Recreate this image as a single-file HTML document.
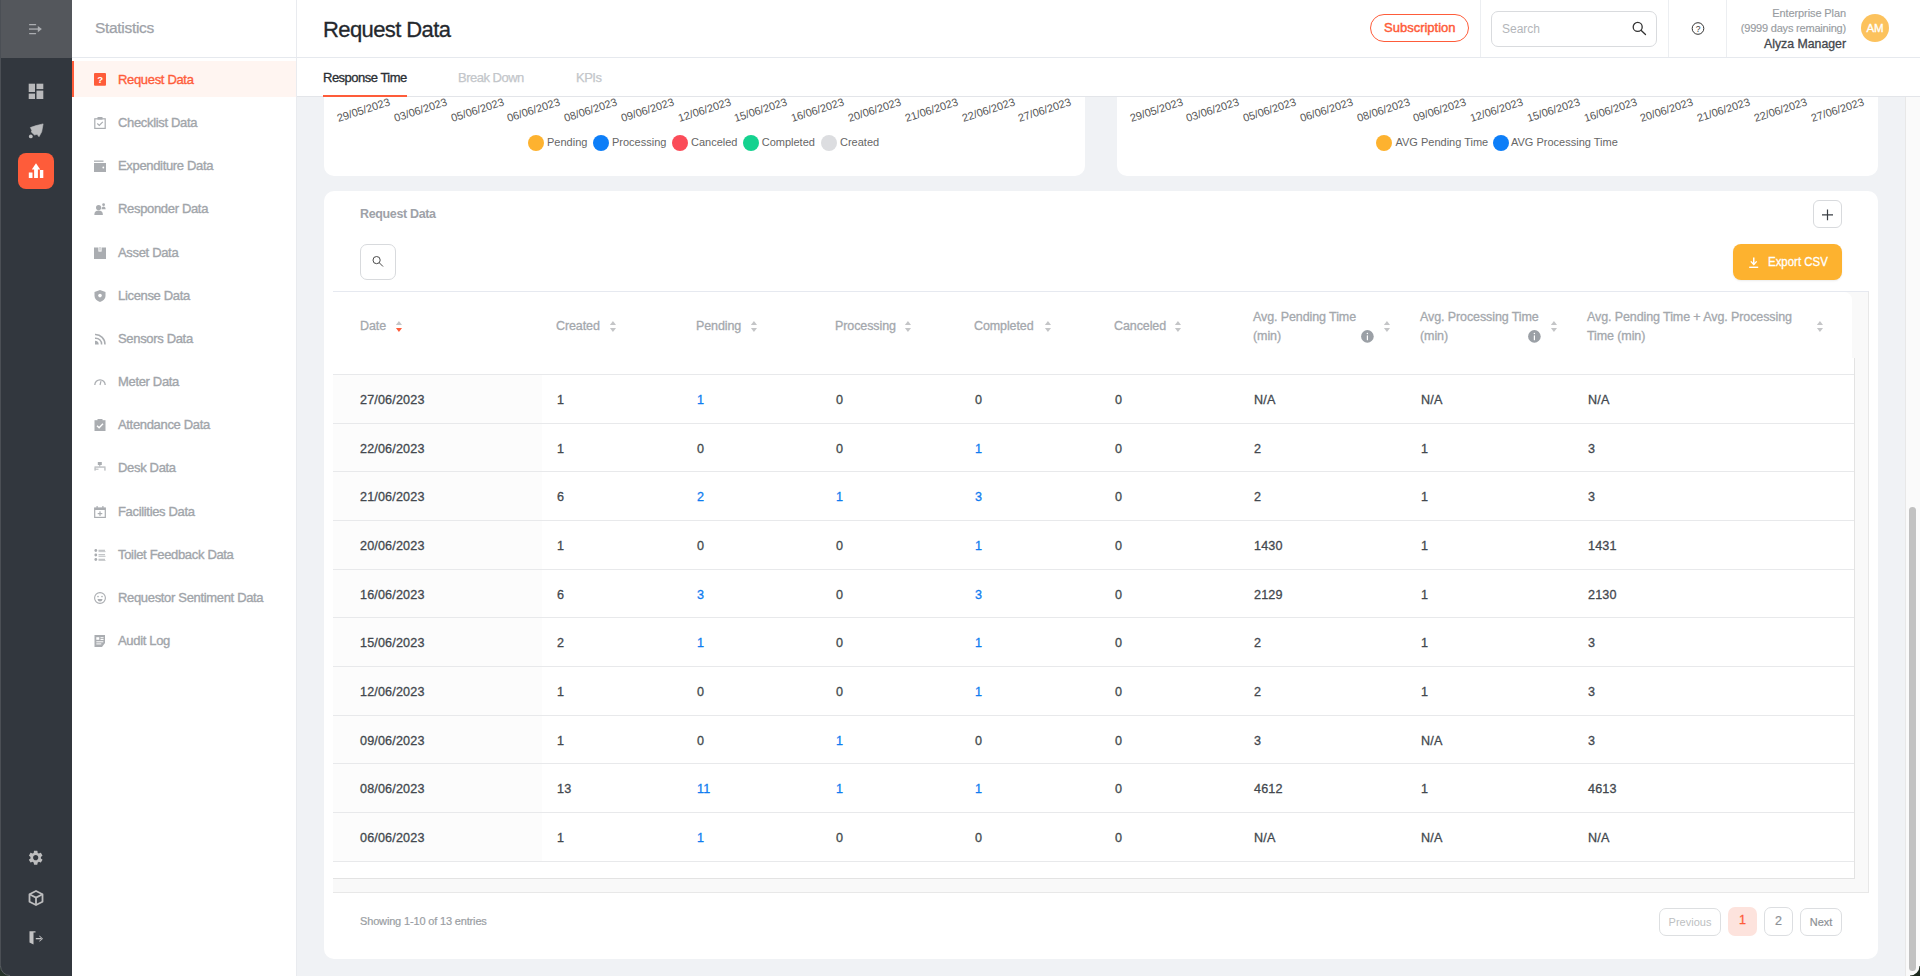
<!DOCTYPE html><html><head><meta charset="utf-8"><style>
*{box-sizing:border-box;margin:0;padding:0}
html,body{width:1920px;height:976px;overflow:hidden;background:#f0f2f5;font-family:"Liberation Sans",sans-serif;position:relative}
.t{position:absolute;white-space:nowrap;line-height:1}
.b{position:absolute}
.menu{position:absolute;left:72px;width:224px;height:36px}
.menu .lbl{position:absolute;left:46px;top:12px;font-size:13px;color:#a1a5aa;white-space:nowrap;line-height:14px;letter-spacing:-0.33px;-webkit-text-stroke:0.35px}
.menu svg{position:absolute;left:22px;top:13px}
.axis{position:absolute;font-size:11px;color:#555;white-space:nowrap;line-height:11px;transform:rotate(-18deg);transform-origin:0 100%}
.leg{position:absolute;font-size:11px;color:#666;white-space:nowrap;line-height:11px}
.dot{position:absolute;width:16px;height:16px;border-radius:50%}
.th{position:absolute;font-size:12.5px;color:#a4a8ad;white-space:nowrap;line-height:19px;letter-spacing:-0.1px;-webkit-text-stroke:0.3px}
.td{position:absolute;font-size:12.6px;color:#43484e;white-space:nowrap;line-height:13px;-webkit-text-stroke:0.3px;letter-spacing:0.15px}
.bl{color:#0f7cf0}
.hl{position:absolute;height:1px;background:#e8e9eb}
</style></head><body>
<div class="b" style="left:0;top:0;width:72px;height:976px;background:#32373e"></div>
<div class="b" style="left:0;top:0;width:72px;height:58px;background:#54575c"></div>
<svg class="b" style="left:0;top:0" width="72" height="58"><g fill="#abadb1"><rect x="29" y="24" width="7.2" height="1.3" rx=".6"/><rect x="29" y="28.4" width="9.5" height="1.3"/><rect x="29" y="32.9" width="7.2" height="1.3" rx=".6"/><path d="M37.8 25.9 L41.9 29.05 L37.8 32.2Z"/></g></svg>
<svg class="b" style="left:28px;top:83px" width="16" height="17"><g fill="#b9b9bb"><rect x="0.7" y="0.7" width="6.3" height="8.3"/><rect x="0.7" y="10.6" width="6.3" height="5.4"/><rect x="8.5" y="0.7" width="6.8" height="5.4"/><rect x="8.5" y="7.6" width="6.8" height="8.4"/></g></svg>
<svg class="b" style="left:28px;top:122px" width="17" height="17"><g fill="#bbbcbe" stroke="#bbbcbe" stroke-width="0.6" stroke-linejoin="round"><path d="M15.1 1.9 L8.1 3.6 L2.4 5.5 L3.8 8.4 L3.3 10.1 L6.5 13 L9 12.3 L11 14.7 L13.7 9.8Z"/></g><circle cx="2.8" cy="14.4" r="1.9" fill="#bbbcbe"/></svg>
<div class="b" style="left:18px;top:153px;width:36px;height:36px;border-radius:8px;background:#fe5c3a"></div>
<svg class="b" style="left:18px;top:153px" width="36" height="36"><g fill="#fff"><rect x="10.8" y="19.5" width="3.7" height="5.5"/><rect x="21.9" y="17" width="3.4" height="8"/><rect x="16.1" y="14.5" width="3.8" height="10.5"/><path d="M13.8 16.5 L18 10.3 L22.2 16.5Z"/></g></svg>
<svg class="b" style="left:27.3px;top:849.4px" width="17.4" height="17.4" viewBox="0 0 24 24"><path fill="#bdbdbe" d="M19.14 12.94c.04-.3.06-.61.06-.94 0-.32-.02-.64-.07-.94l2.03-1.58a.49.49 0 0 0 .12-.61l-1.92-3.32a.488.488 0 0 0-.59-.22l-2.39.96c-.5-.38-1.03-.7-1.62-.94l-.36-2.54a.484.484 0 0 0-.48-.41h-3.84c-.24 0-.43.17-.47.41l-.36 2.54c-.59.24-1.13.57-1.62.94l-2.39-.96c-.22-.08-.47 0-.59.22L2.74 8.87c-.12.21-.08.47.12.61l2.03 1.58c-.05.3-.09.63-.09.94s.02.64.07.94l-2.03 1.58a.49.49 0 0 0-.12.61l1.92 3.32c.12.22.37.29.59.22l2.39-.96c.5.38 1.03.7 1.62.94l.36 2.54c.05.24.24.41.48.41h3.84c.24 0 .44-.17.47-.41l.36-2.54c.59-.24 1.13-.56 1.62-.94l2.39.96c.22.08.47 0 .59-.22l1.92-3.32c.12-.22.07-.47-.12-.61l-2.01-1.58zM12 15.6c-1.98 0-3.6-1.62-3.6-3.6s1.62-3.6 3.6-3.6 3.6 1.62 3.6 3.6-1.62 3.6-3.6 3.6z"/></svg>
<svg class="b" style="left:28px;top:890px" width="16" height="16"><g fill="none" stroke="#bdbdbe" stroke-width="1.8" stroke-linejoin="round"><path d="M8 1 L14.5 4.3 L14.5 11.7 L8 15 L1.5 11.7 L1.5 4.3Z"/><path d="M1.5 4.3 L8 7.6 L14.5 4.3 M8 7.6 L8 15"/></g></svg>
<svg class="b" style="left:28px;top:930px" width="16" height="16"><g fill="#c3c3c4"><path d="M1.5 1.3 L7.5 1.3 L7.5 2.5 L5.5 2.5 L5.5 14.5 L1.5 12.5Z"/><rect x="7.8" y="8" width="5.5" height="1.3"/><path d="M11.5 5.6 L15 8.65 L11.5 11.7 L11.2 11.1 L13.8 8.65 L11.2 6.2Z"/></g></svg>
<div class="b" style="left:72px;top:0;width:225px;height:976px;background:#fff;border-right:1px solid #e9ebef"></div>
<div class="b" style="left:72px;top:57px;width:225px;height:1px;background:#e6e9ee"></div>
<div class="t" style="left:95px;top:20px;font-size:15.5px;color:#9ea2a8;letter-spacing:-0.3px;-webkit-text-stroke:0.25px">Statistics</div>
<div class="menu" style="top:61.0px;background:#fff5f1;border-left:2px solid #fe5c3a"></div>
<div class="menu" style="top:61.0px"><svg width="12" height="13" style="top:12px"><rect x="0" y="0" width="12" height="12.7" rx="1" fill="#fe5c3a"/><text x="6.1" y="10" font-size="9.5" font-weight="bold" fill="#fff" text-anchor="middle" font-family="Liberation Sans">?</text></svg><div class="lbl" style="color:#fe5c3a">Request Data</div></div>
<div class="menu" style="top:104.2px"><svg width="12" height="12"><g fill="none" stroke="#aaadb1" stroke-width="1.2"><rect x="0.8" y="1.8" width="10.4" height="9.6"/><path d="M3.3 6.5 L5.3 8.4 L8.8 4.8"/></g><rect x="3.5" y="0" width="5" height="2.6" fill="#aaadb1"/></svg><div class="lbl">Checklist Data</div></div>
<div class="menu" style="top:147.3px"><svg width="12" height="12"><g fill="#aaadb1"><rect x="0" y="0.5" width="9.5" height="1.3"/><rect x="0" y="3" width="12" height="9"/></g><circle cx="9.3" cy="7.5" r="0.9" fill="#fff"/></svg><div class="lbl">Expenditure Data</div></div>
<div class="menu" style="top:190.4px"><svg width="12" height="12"><g fill="#aaadb1"><circle cx="4.6" cy="4.6" r="2.6"/><path d="M0.3 12 C0.3 8.8 2 7.6 4.6 7.6 C7.2 7.6 8.9 8.8 8.9 12Z"/><circle cx="9.6" cy="1.7" r="1.4"/><path d="M7.6 6.3 C7.6 4.3 8.4 3.5 9.6 3.5 C10.8 3.5 11.6 4.3 11.6 6.3Z"/></g></svg><div class="lbl">Responder Data</div></div>
<div class="menu" style="top:233.6px"><svg width="12" height="12"><rect x="0" y="0.5" width="12" height="11.5" fill="#aaadb1"/><rect x="4.4" y="0" width="3.2" height="4.6" fill="#fff"/><rect x="5.2" y="0" width="1.6" height="3.6" fill="#cfd1d4"/></svg><div class="lbl">Asset Data</div></div>
<div class="menu" style="top:276.8px"><svg width="12" height="12"><path fill="#aaadb1" d="M6 0 L11.5 2 L11.5 6 C11.5 9 9 11 6 12 C3 11 0.5 9 0.5 6 L0.5 2Z"/><circle cx="6" cy="5.6" r="1.8" fill="#fff"/></svg><div class="lbl">License Data</div></div>
<div class="menu" style="top:319.9px"><svg width="12" height="12"><g fill="none" stroke="#aaadb1" stroke-width="1.5"><path d="M1 5.2 A6 6 0 0 1 7.6 11.5"/><path d="M1 1.6 A9.6 9.6 0 0 1 11 11.5"/></g><path d="M1 7.8 A3.7 3.7 0 0 1 4.7 11.5 L1 11.5Z" fill="#aaadb1"/></svg><div class="lbl">Sensors Data</div></div>
<div class="menu" style="top:363.1px"><svg width="12" height="12"><g fill="none" stroke="#aaadb1" stroke-width="1.3"><path d="M0.8 9 A5.2 5.2 0 0 1 11.2 9"/></g><path d="M6 9 L7 5.2" stroke="#aaadb1" stroke-width="1.2"/></svg><div class="lbl">Meter Data</div></div>
<div class="menu" style="top:406.2px"><svg width="12" height="12"><rect x="0.5" y="1.2" width="11" height="10.8" fill="#aaadb1"/><rect x="3.5" y="0" width="5" height="2.4" fill="#aaadb1"/><path d="M3 6.7 L5.1 8.7 L9 4.7" fill="none" stroke="#fff" stroke-width="1.4"/></svg><div class="lbl">Attendance Data</div></div>
<div class="menu" style="top:449.3px"><svg width="12" height="12"><g fill="#aaadb1"><rect x="3.8" y="0" width="4" height="3"/><rect x="5.3" y="3" width="1" height="1.5"/><rect x="0.5" y="4.5" width="11" height="1.1"/><rect x="0.5" y="5.6" width="1.1" height="3"/><rect x="10.4" y="5.6" width="1.1" height="3"/><rect x="1.5" y="6.5" width="3" height="1.5" opacity=".6"/></g></svg><div class="lbl">Desk Data</div></div>
<div class="menu" style="top:492.5px"><svg width="12" height="12"><g fill="none" stroke="#aaadb1" stroke-width="1.2"><rect x="0.7" y="2" width="10.6" height="9.4"/></g><g fill="#aaadb1"><rect x="0.7" y="2" width="10.6" height="2"/><rect x="2.5" y="0" width="1.2" height="2.5"/><rect x="8.3" y="0" width="1.2" height="2.5"/><rect x="5.4" y="5.3" width="1.2" height="4.6"/><rect x="3.7" y="7" width="4.6" height="1.2"/></g></svg><div class="lbl">Facilities Data</div></div>
<div class="menu" style="top:535.6px"><svg width="12" height="12"><g fill="#aaadb1"><circle cx="1.8" cy="1.5" r="1.4"/><circle cx="1.8" cy="6" r="1.4"/><circle cx="1.8" cy="10.5" r="1.4"/><rect x="4.5" y="0.8" width="6.5" height="0.9"/><rect x="4.5" y="2.4" width="7" height="0.7"/><rect x="4.5" y="5.3" width="6.5" height="0.9"/><rect x="4.5" y="6.9" width="7" height="0.7"/><rect x="4.5" y="9.8" width="6.5" height="0.9"/><rect x="4.5" y="11.4" width="7" height="0.7"/></g></svg><div class="lbl">Toilet Feedback Data</div></div>
<div class="menu" style="top:578.8px"><svg width="12" height="12"><g fill="none" stroke="#aaadb1" stroke-width="1.1"><circle cx="6" cy="6" r="5.4"/></g><g fill="#aaadb1"><circle cx="4" cy="4.6" r="0.8"/><circle cx="8" cy="4.6" r="0.8"/><path d="M3.5 7 L8.5 7 C8.3 8.7 7.3 9.5 6 9.5 C4.7 9.5 3.7 8.7 3.5 7Z"/></g></svg><div class="lbl">Requestor Sentiment Data</div></div>
<div class="menu" style="top:621.9px"><svg width="12" height="12"><g fill="#aaadb1"><path d="M0.5 0 L11 0 L11 8 L8 12 L0.5 12Z"/></g><g fill="#fff"><rect x="2.3" y="2.2" width="3" height="2.6"/><rect x="6.5" y="2.2" width="3" height="1"/><rect x="6.5" y="4" width="3" height="1"/><rect x="2.3" y="6.3" width="7" height="1"/><rect x="2.3" y="8.4" width="5" height="1"/></g></svg><div class="lbl">Audit Log</div></div>
<div class="b" style="left:297px;top:0;width:1623px;height:58px;background:#fff;border-bottom:1px solid #e6e9ee"></div>
<div class="t" style="left:323px;top:19px;font-size:22px;color:#24282d;letter-spacing:-0.6px;-webkit-text-stroke:0.3px">Request Data</div>
<div class="b" style="left:1370px;top:14px;width:99px;height:28px;border:1px solid #fe5c3a;border-radius:14px"></div>
<div class="t" style="left:1384px;top:21px;font-size:13px;color:#fe5c3a;-webkit-text-stroke:0.45px">Subscription</div>
<div class="b" style="left:1480px;top:0;width:1px;height:57px;background:#eceef1"></div>
<div class="b" style="left:1668px;top:0;width:1px;height:57px;background:#eceef1"></div>
<div class="b" style="left:1726px;top:0;width:1px;height:57px;background:#eceef1"></div>
<div class="b" style="left:1491px;top:11px;width:166px;height:36px;border:1px solid #d9dbde;border-radius:7px"></div>
<div class="t" style="left:1502px;top:23px;font-size:12px;color:#b3b6ba">Search</div>
<svg class="b" style="left:1631px;top:20px" width="16" height="16"><g fill="none" stroke="#333" stroke-width="1.3"><circle cx="6.7" cy="6.9" r="4.5"/><path d="M10 10.2 L14.5 14.5" stroke-linecap="round"/></g></svg>
<svg class="b" style="left:1690px;top:21px" width="16" height="16"><circle cx="8" cy="7.5" r="5.8" fill="none" stroke="#333" stroke-width="1"/><text x="8" y="10.6" font-size="8.5" text-anchor="middle" fill="#333" font-family="Liberation Sans">?</text></svg>
<div class="t" style="right:74px;top:8px;font-size:11px;color:#989ca1;text-align:right;-webkit-text-stroke:0.15px;letter-spacing:-0.1px">Enterprise Plan</div>
<div class="t" style="right:74px;top:23px;font-size:11px;color:#989ca1;text-align:right;-webkit-text-stroke:0.15px;letter-spacing:-0.2px">(9999 days remaining)</div>
<div class="t" style="right:74px;top:38px;font-size:12.3px;color:#43474d;text-align:right;-webkit-text-stroke:0.3px">Alyza Manager</div>
<div class="b" style="left:1861px;top:14px;width:28px;height:28px;border-radius:50%;background:#fcc25d"></div>
<div class="t" style="left:1861px;top:23px;width:28px;text-align:center;font-size:11.5px;color:#fff;-webkit-text-stroke:0.3px">AM</div>
<div class="b" style="left:324px;top:60px;width:761px;height:116px;background:#fff;border-radius:10px"></div>
<div class="b" style="left:1117px;top:60px;width:761px;height:116px;background:#fff;border-radius:10px"></div>
<div class="axis" style="left:339.0px;top:113px">29/05/2023</div>
<div class="axis" style="left:395.8px;top:113px">03/06/2023</div>
<div class="axis" style="left:452.5px;top:113px">05/06/2023</div>
<div class="axis" style="left:509.3px;top:113px">06/06/2023</div>
<div class="axis" style="left:566.1px;top:113px">08/06/2023</div>
<div class="axis" style="left:622.9px;top:113px">09/06/2023</div>
<div class="axis" style="left:679.6px;top:113px">12/06/2023</div>
<div class="axis" style="left:736.4px;top:113px">15/06/2023</div>
<div class="axis" style="left:793.2px;top:113px">16/06/2023</div>
<div class="axis" style="left:849.9px;top:113px">20/06/2023</div>
<div class="axis" style="left:906.7px;top:113px">21/06/2023</div>
<div class="axis" style="left:963.5px;top:113px">22/06/2023</div>
<div class="axis" style="left:1020.2px;top:113px">27/06/2023</div>
<div class="axis" style="left:1131.5px;top:113px">29/05/2023</div>
<div class="axis" style="left:1188.3px;top:113px">03/06/2023</div>
<div class="axis" style="left:1245.0px;top:113px">05/06/2023</div>
<div class="axis" style="left:1301.8px;top:113px">06/06/2023</div>
<div class="axis" style="left:1358.6px;top:113px">08/06/2023</div>
<div class="axis" style="left:1415.3px;top:113px">09/06/2023</div>
<div class="axis" style="left:1472.1px;top:113px">12/06/2023</div>
<div class="axis" style="left:1528.9px;top:113px">15/06/2023</div>
<div class="axis" style="left:1585.7px;top:113px">16/06/2023</div>
<div class="axis" style="left:1642.4px;top:113px">20/06/2023</div>
<div class="axis" style="left:1699.2px;top:113px">21/06/2023</div>
<div class="axis" style="left:1756.0px;top:113px">22/06/2023</div>
<div class="axis" style="left:1812.7px;top:113px">27/06/2023</div>
<div class="dot" style="left:528px;top:134.5px;background:#fdb22f"></div><div class="leg" style="left:547px;top:137px">Pending</div>
<div class="dot" style="left:593px;top:134.5px;background:#0d7ef8"></div><div class="leg" style="left:612px;top:137px">Processing</div>
<div class="dot" style="left:671.5px;top:134.5px;background:#fb4c59"></div><div class="leg" style="left:691px;top:137px">Canceled</div>
<div class="dot" style="left:742.7px;top:134.5px;background:#15d28f"></div><div class="leg" style="left:761.7px;top:137px">Completed</div>
<div class="dot" style="left:821px;top:134.5px;background:#dcdde0"></div><div class="leg" style="left:840px;top:137px">Created</div>
<div class="dot" style="left:1376.4px;top:134.5px;background:#fdb22f"></div><div class="leg" style="left:1395.5px;top:137px">AVG Pending Time</div>
<div class="dot" style="left:1492.6px;top:134.5px;background:#0d7ef8"></div><div class="leg" style="left:1511px;top:137px">AVG Processing Time</div>
<div class="b" style="left:297px;top:58px;width:1623px;height:39px;background:#fff;border-bottom:1px solid #e3e5e9"></div>
<div class="t" style="left:323px;top:71px;font-size:13px;color:#2a2e33;letter-spacing:-0.5px;-webkit-text-stroke:0.3px">Response Time</div>
<div class="t" style="left:458px;top:71px;font-size:13px;color:#c3c6ca;letter-spacing:-0.5px;-webkit-text-stroke:0.25px">Break Down</div>
<div class="t" style="left:576px;top:71px;font-size:13px;color:#c3c6ca;letter-spacing:-0.5px;-webkit-text-stroke:0.25px">KPIs</div>
<div class="b" style="left:323px;top:95px;width:84px;height:2px;background:#fe5c3a"></div>
<div class="b" style="left:324px;top:191px;width:1554px;height:768px;background:#fff;border-radius:10px"></div>
<div class="t" style="left:360px;top:208px;font-size:12.5px;color:#9ea2a8;font-weight:bold;letter-spacing:-0.35px">Request Data</div>
<div class="b" style="left:1813px;top:200px;width:29px;height:28px;border:1px solid #d8dadd;border-radius:6px"></div>
<svg class="b" style="left:1813px;top:200px" width="29" height="28"><path d="M14.5 9.5 V20.2 M9 14.8 H20" stroke="#3a3f44" stroke-width="1.2"/></svg>
<div class="b" style="left:360px;top:244px;width:36px;height:36px;border:1px solid #d8dadd;border-radius:7px"></div>
<svg class="b" style="left:360px;top:244px" width="36" height="36"><g fill="none" stroke="#4a4a4a" stroke-width="1"><circle cx="16.6" cy="16.1" r="3.6"/><path d="M19.2 18.7 L23 22.5"/></g></svg>
<div class="b" style="left:1733px;top:244px;width:109px;height:36px;background:#fdb22f;border-radius:8px;box-shadow:0 1px 2px rgba(0,0,0,.08)"></div>
<svg class="b" style="left:1747px;top:256px" width="14" height="14"><g fill="#fff"><rect x="6" y="1.5" width="1.5" height="7"/><path d="M3.3 5.8 L6.75 9.5 L10.2 5.8 L9.2 5 L6.75 7.5 L4.3 5Z"/><rect x="2.2" y="10.6" width="9" height="1.4"/></g></svg>
<div class="t" style="left:1767.5px;top:255px;font-size:13px;color:#fff;transform:scaleX(0.88);transform-origin:0 0;-webkit-text-stroke:0.3px">Export CSV</div>
<div class="b" style="left:333px;top:291px;width:1536px;height:602px;background:#f9f9f9;border:1px solid #e8e8e8;border-top-color:#e6e9f0;border-left:none"></div>
<div class="b" style="left:333px;top:358px;width:1522px;height:521px;background:#fff;border-right:1px solid #e3e3e3;border-bottom:1px solid #e3e3e3"></div>
<div class="b" style="left:333px;top:292px;width:1519px;height:82px;background:#fff;border-top-right-radius:8px"></div>
<div class="b" style="left:333px;top:375px;width:209px;height:486px;background:#fcfcfc"></div>
<div class="th" style="left:360px;top:317px">Date</div>
<svg class="b" style="left:394.5px;top:320px" width="8" height="14"><path d="M0.9 5.1 L3.95 1.1 L7 5.1Z" fill="#c4c5c7"/><path d="M0.9 8.1 L3.95 12.1 L7 8.1Z" fill="#fe5c3a"/></svg>
<div class="th" style="left:556px;top:317px">Created</div>
<svg class="b" style="left:608.5px;top:320px" width="8" height="14"><path d="M0.9 5.1 L3.95 1.1 L7 5.1Z" fill="#c4c5c7"/><path d="M0.9 8.1 L3.95 12.1 L7 8.1Z" fill="#c4c5c7"/></svg>
<div class="th" style="left:696px;top:317px">Pending</div>
<svg class="b" style="left:749.5px;top:320px" width="8" height="14"><path d="M0.9 5.1 L3.95 1.1 L7 5.1Z" fill="#c4c5c7"/><path d="M0.9 8.1 L3.95 12.1 L7 8.1Z" fill="#c4c5c7"/></svg>
<div class="th" style="left:835px;top:317px">Processing</div>
<svg class="b" style="left:903.5px;top:320px" width="8" height="14"><path d="M0.9 5.1 L3.95 1.1 L7 5.1Z" fill="#c4c5c7"/><path d="M0.9 8.1 L3.95 12.1 L7 8.1Z" fill="#c4c5c7"/></svg>
<div class="th" style="left:974px;top:317px">Completed</div>
<svg class="b" style="left:1043.5px;top:320px" width="8" height="14"><path d="M0.9 5.1 L3.95 1.1 L7 5.1Z" fill="#c4c5c7"/><path d="M0.9 8.1 L3.95 12.1 L7 8.1Z" fill="#c4c5c7"/></svg>
<div class="th" style="left:1114px;top:317px">Canceled</div>
<svg class="b" style="left:1173.5px;top:320px" width="8" height="14"><path d="M0.9 5.1 L3.95 1.1 L7 5.1Z" fill="#c4c5c7"/><path d="M0.9 8.1 L3.95 12.1 L7 8.1Z" fill="#c4c5c7"/></svg>
<div class="th" style="left:1253px;top:308px">Avg. Pending Time<br>(min)</div>
<div class="th" style="left:1420px;top:308px">Avg. Processing Time<br>(min)</div>
<div class="th" style="left:1587px;top:308px">Avg. Pending Time + Avg. Processing<br>Time (min)</div>
<svg class="b" style="left:1382.5px;top:320px" width="8" height="14"><path d="M0.9 5.1 L3.95 1.1 L7 5.1Z" fill="#c4c5c7"/><path d="M0.9 8.1 L3.95 12.1 L7 8.1Z" fill="#c4c5c7"/></svg>
<svg class="b" style="left:1549.5px;top:320px" width="8" height="14"><path d="M0.9 5.1 L3.95 1.1 L7 5.1Z" fill="#c4c5c7"/><path d="M0.9 8.1 L3.95 12.1 L7 8.1Z" fill="#c4c5c7"/></svg>
<svg class="b" style="left:1815.5px;top:320px" width="8" height="14"><path d="M0.9 5.1 L3.95 1.1 L7 5.1Z" fill="#c4c5c7"/><path d="M0.9 8.1 L3.95 12.1 L7 8.1Z" fill="#c4c5c7"/></svg>
<svg class="b" style="left:1361px;top:330px" width="14" height="14"><circle cx="6.4" cy="6.4" r="6.3" fill="#9ba0a6"/><rect x="5.8" y="5.2" width="1.2" height="5" rx=".5" fill="#fff"/><circle cx="6.4" cy="3.6" r=".75" fill="#fff"/></svg>
<svg class="b" style="left:1528px;top:330px" width="14" height="14"><circle cx="6.4" cy="6.4" r="6.3" fill="#9ba0a6"/><rect x="5.8" y="5.2" width="1.2" height="5" rx=".5" fill="#fff"/><circle cx="6.4" cy="3.6" r=".75" fill="#fff"/></svg>
<div class="hl" style="left:333px;top:374px;width:1521px"></div>
<div class="td" style="left:360px;top:393.60px">27/06/2023</div>
<div class="td" style="left:557px;top:393.60px">1</div>
<div class="td bl" style="left:697px;top:393.60px">1</div>
<div class="td" style="left:836px;top:393.60px">0</div>
<div class="td" style="left:975px;top:393.60px">0</div>
<div class="td" style="left:1115px;top:393.60px">0</div>
<div class="td" style="left:1254px;top:393.60px">N/A</div>
<div class="td" style="left:1421px;top:393.60px">N/A</div>
<div class="td" style="left:1588px;top:393.60px">N/A</div>
<div class="hl" style="left:333px;top:423px;width:1521px"></div>
<div class="td" style="left:360px;top:442.60px">22/06/2023</div>
<div class="td" style="left:557px;top:442.60px">1</div>
<div class="td" style="left:697px;top:442.60px">0</div>
<div class="td" style="left:836px;top:442.60px">0</div>
<div class="td bl" style="left:975px;top:442.60px">1</div>
<div class="td" style="left:1115px;top:442.60px">0</div>
<div class="td" style="left:1254px;top:442.60px">2</div>
<div class="td" style="left:1421px;top:442.60px">1</div>
<div class="td" style="left:1588px;top:442.60px">3</div>
<div class="hl" style="left:333px;top:471px;width:1521px"></div>
<div class="td" style="left:360px;top:490.60px">21/06/2023</div>
<div class="td" style="left:557px;top:490.60px">6</div>
<div class="td bl" style="left:697px;top:490.60px">2</div>
<div class="td bl" style="left:836px;top:490.60px">1</div>
<div class="td bl" style="left:975px;top:490.60px">3</div>
<div class="td" style="left:1115px;top:490.60px">0</div>
<div class="td" style="left:1254px;top:490.60px">2</div>
<div class="td" style="left:1421px;top:490.60px">1</div>
<div class="td" style="left:1588px;top:490.60px">3</div>
<div class="hl" style="left:333px;top:520px;width:1521px"></div>
<div class="td" style="left:360px;top:539.60px">20/06/2023</div>
<div class="td" style="left:557px;top:539.60px">1</div>
<div class="td" style="left:697px;top:539.60px">0</div>
<div class="td" style="left:836px;top:539.60px">0</div>
<div class="td bl" style="left:975px;top:539.60px">1</div>
<div class="td" style="left:1115px;top:539.60px">0</div>
<div class="td" style="left:1254px;top:539.60px">1430</div>
<div class="td" style="left:1421px;top:539.60px">1</div>
<div class="td" style="left:1588px;top:539.60px">1431</div>
<div class="hl" style="left:333px;top:569px;width:1521px"></div>
<div class="td" style="left:360px;top:588.60px">16/06/2023</div>
<div class="td" style="left:557px;top:588.60px">6</div>
<div class="td bl" style="left:697px;top:588.60px">3</div>
<div class="td" style="left:836px;top:588.60px">0</div>
<div class="td bl" style="left:975px;top:588.60px">3</div>
<div class="td" style="left:1115px;top:588.60px">0</div>
<div class="td" style="left:1254px;top:588.60px">2129</div>
<div class="td" style="left:1421px;top:588.60px">1</div>
<div class="td" style="left:1588px;top:588.60px">2130</div>
<div class="hl" style="left:333px;top:617px;width:1521px"></div>
<div class="td" style="left:360px;top:636.60px">15/06/2023</div>
<div class="td" style="left:557px;top:636.60px">2</div>
<div class="td bl" style="left:697px;top:636.60px">1</div>
<div class="td" style="left:836px;top:636.60px">0</div>
<div class="td bl" style="left:975px;top:636.60px">1</div>
<div class="td" style="left:1115px;top:636.60px">0</div>
<div class="td" style="left:1254px;top:636.60px">2</div>
<div class="td" style="left:1421px;top:636.60px">1</div>
<div class="td" style="left:1588px;top:636.60px">3</div>
<div class="hl" style="left:333px;top:666px;width:1521px"></div>
<div class="td" style="left:360px;top:685.60px">12/06/2023</div>
<div class="td" style="left:557px;top:685.60px">1</div>
<div class="td" style="left:697px;top:685.60px">0</div>
<div class="td" style="left:836px;top:685.60px">0</div>
<div class="td bl" style="left:975px;top:685.60px">1</div>
<div class="td" style="left:1115px;top:685.60px">0</div>
<div class="td" style="left:1254px;top:685.60px">2</div>
<div class="td" style="left:1421px;top:685.60px">1</div>
<div class="td" style="left:1588px;top:685.60px">3</div>
<div class="hl" style="left:333px;top:715px;width:1521px"></div>
<div class="td" style="left:360px;top:734.60px">09/06/2023</div>
<div class="td" style="left:557px;top:734.60px">1</div>
<div class="td" style="left:697px;top:734.60px">0</div>
<div class="td bl" style="left:836px;top:734.60px">1</div>
<div class="td" style="left:975px;top:734.60px">0</div>
<div class="td" style="left:1115px;top:734.60px">0</div>
<div class="td" style="left:1254px;top:734.60px">3</div>
<div class="td" style="left:1421px;top:734.60px">N/A</div>
<div class="td" style="left:1588px;top:734.60px">3</div>
<div class="hl" style="left:333px;top:763px;width:1521px"></div>
<div class="td" style="left:360px;top:782.60px">08/06/2023</div>
<div class="td" style="left:557px;top:782.60px">13</div>
<div class="td bl" style="left:697px;top:782.60px">11</div>
<div class="td bl" style="left:836px;top:782.60px">1</div>
<div class="td bl" style="left:975px;top:782.60px">1</div>
<div class="td" style="left:1115px;top:782.60px">0</div>
<div class="td" style="left:1254px;top:782.60px">4612</div>
<div class="td" style="left:1421px;top:782.60px">1</div>
<div class="td" style="left:1588px;top:782.60px">4613</div>
<div class="hl" style="left:333px;top:812px;width:1521px"></div>
<div class="td" style="left:360px;top:831.60px">06/06/2023</div>
<div class="td" style="left:557px;top:831.60px">1</div>
<div class="td bl" style="left:697px;top:831.60px">1</div>
<div class="td" style="left:836px;top:831.60px">0</div>
<div class="td" style="left:975px;top:831.60px">0</div>
<div class="td" style="left:1115px;top:831.60px">0</div>
<div class="td" style="left:1254px;top:831.60px">N/A</div>
<div class="td" style="left:1421px;top:831.60px">N/A</div>
<div class="td" style="left:1588px;top:831.60px">N/A</div>
<div class="hl" style="left:333px;top:861px;width:1521px"></div>
<div class="t" style="left:360px;top:916px;font-size:11px;color:#9a9ea3;letter-spacing:-0.16px;-webkit-text-stroke:0.2px">Showing 1-10 of 13 entries</div>
<div class="b" style="left:1659px;top:908px;width:62px;height:28px;border:1px solid #dddfe1;background:#fff;border-radius:7px;font-size:11px;color:#bdbfc2;text-align:center;line-height:26px;">Previous</div>
<div class="b" style="left:1728px;top:907px;width:29px;height:29px;background:#fde3dd;border-radius:7px;font-size:12.5px;color:#fe5c3a;text-align:center;line-height:27.5px;-webkit-text-stroke:0.3px">1</div>
<div class="b" style="left:1764px;top:907px;width:29px;height:29px;border:1px solid #dcdee1;background:#fff;border-radius:7px;font-size:12.5px;color:#8d9196;text-align:center;line-height:26.5px;-webkit-text-stroke:0.2px">2</div>
<div class="b" style="left:1800px;top:908px;width:42px;height:28px;border:1px solid #dcdee1;background:#fff;border-radius:7px;font-size:11px;color:#8d9196;text-align:center;line-height:26px;-webkit-text-stroke:0.2px">Next</div>
<div class="b" style="left:1905px;top:97px;width:15px;height:879px;background:#fafafa;border-left:1px solid #e8e8e8"></div>
<div class="b" style="left:1909px;top:507px;width:7px;height:464px;background:#c1c1c1;border-radius:4px"></div>
<svg class="b" style="left:0;top:966px" width="10" height="10"><path d="M0 0 L0 10 L10 10 L10 9.5 A9.5 9.5 0 0 1 0.5 0 Z" fill="#26332a"/><path d="M0.5 0 A9.5 9.5 0 0 0 10 9.5" fill="none" stroke="#5a5e63" stroke-width="1"/></svg>
<svg class="b" style="left:1910px;top:966px" width="10" height="10"><path d="M10 0 L10 10 L0 10 L0 9.5 A9.5 9.5 0 0 0 9.5 0 Z" fill="#1d2a1f"/></svg>
<div class="b" style="left:0;top:0;width:1px;height:966px;background:#4b4f55"></div>
</body></html>
